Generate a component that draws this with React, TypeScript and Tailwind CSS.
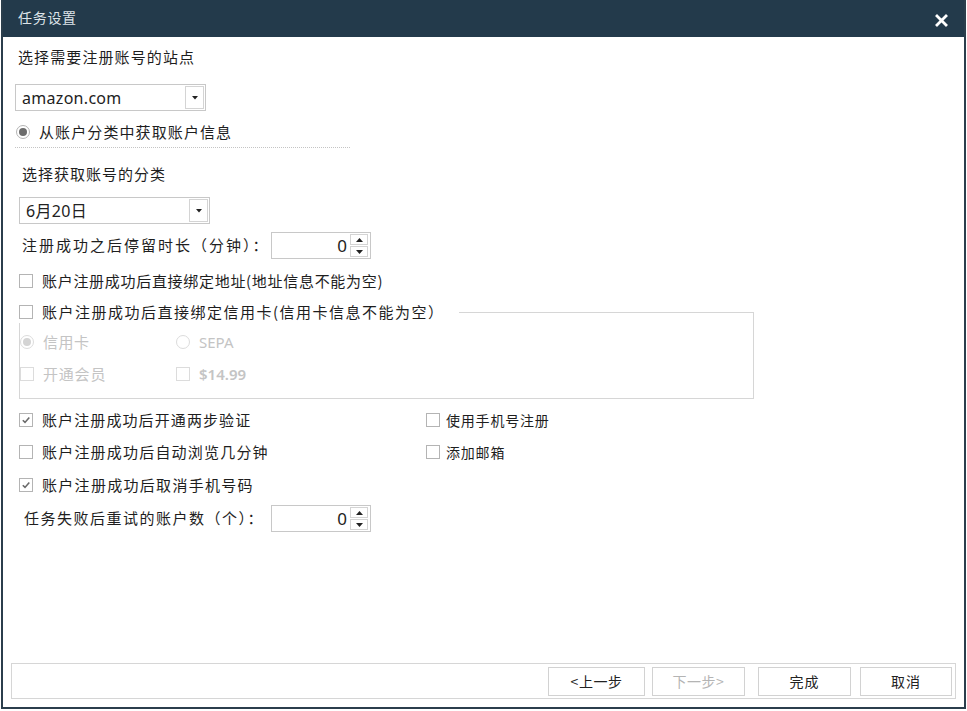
import React from "react";

function Check({ checked = false, disabled = false }: { checked?: boolean; disabled?: boolean }) {
  return (
    <span
      className={
        disabled
          ? "w-[14px] h-[14px] border border-[#dcdcdc] bg-white flex items-center justify-center shrink-0"
          : "w-[14px] h-[14px] border border-[#b4b4b4] bg-white flex items-center justify-center shrink-0"
      }
    >
      {checked && (
        <svg width="10" height="10" viewBox="0 0 10 10">
          <path d="M1.8 5.2 L4 7.4 L8.3 2.4" fill="none" stroke="#6a6a6a" strokeWidth="1.6" />
        </svg>
      )}
    </span>
  );
}

function Radio({ checked = false, disabled = false }: { checked?: boolean; disabled?: boolean }) {
  return (
    <span
      className={
        disabled
          ? "w-[14px] h-[14px] rounded-full border border-[#dcdcdc] bg-white flex items-center justify-center shrink-0"
          : "w-[14px] h-[14px] rounded-full border border-[#b4b4b4] bg-white flex items-center justify-center shrink-0"
      }
    >
      {checked && (
        <span
          className={
            disabled
              ? "w-[8px] h-[8px] rounded-full bg-[#d4d4d4]"
              : "w-[8px] h-[8px] rounded-full bg-[#6c6c6c]"
          }
        />
      )}
    </span>
  );
}

function Combo({ value }: { value: string }) {
  return (
    <div className="w-[191px] h-[27px] border border-[#c8c8c8] bg-white flex items-stretch">
      <div className="flex-1 flex items-center pl-[6px] text-[16px] tracking-[0.3px] font-['Noto_Sans','Noto_Sans_CJK_SC',sans-serif] text-[#222]">
        {value}
      </div>
      <div className="w-[19px] my-[1px] mr-[1px] border border-[#d4d4d4] flex items-center justify-center">
        <svg width="6" height="4" viewBox="0 0 6 4">
          <path d="M0 0 L6 0 L3 3.5 Z" fill="#222" />
        </svg>
      </div>
    </div>
  );
}

function Spin({ value }: { value: string }) {
  return (
    <div className="w-[100px] h-[27px] border border-[#c8c8c8] bg-white flex items-stretch">
      <div className="flex-1 flex items-center justify-end pr-[3px] text-[17px] font-['Noto_Sans',sans-serif] text-[#222]">
        {value}
      </div>
      <div className="w-[18px] my-[1px] mr-[2px] flex flex-col gap-[1px]">
        <div className="flex-1 border border-[#d4d4d4] flex items-center justify-center">
          <svg width="7" height="4" viewBox="0 0 7 4">
            <path d="M0 4 L7 4 L3.5 0 Z" fill="#222" />
          </svg>
        </div>
        <div className="flex-1 border border-[#d4d4d4] flex items-center justify-center">
          <svg width="7" height="4" viewBox="0 0 7 4">
            <path d="M0 0 L7 0 L3.5 4 Z" fill="#222" />
          </svg>
        </div>
      </div>
    </div>
  );
}

export default function App() {
  return (
    <div className="w-[967px] h-[711px] bg-white overflow-hidden font-['Noto_Sans_CJK_SC','Noto_Sans',sans-serif] text-[#1e1e1e]">
      <div className="ml-[1px] w-[965px] h-[709px] border-x-2 border-b-2 border-[#2b3e4c] bg-white flex flex-col">
        {/* title bar */}
        <div className="h-[37px] shrink-0 bg-[#233a4b] flex justify-between pl-[15px] pr-[16px]">
          <div className="pt-[6px] text-[14px] leading-[22px] tracking-[0.7px] text-[#dde3e8]">任务设置</div>
          <div className="pt-[14px]">
            <svg width="13" height="13" viewBox="0 0 13 13">
              <path d="M2 2 L11 11 M11 2 L2 11" stroke="#ffffff" strokeWidth="2.8" strokeLinecap="square" />
            </svg>
          </div>
        </div>

        {/* body */}
        <div className="flex-1 flex flex-col text-[15px]">
          <div className="mt-[9px] ml-[15px] h-[22px] leading-[22px] tracking-[1.1px]">选择需要注册账号的站点</div>

          <div className="mt-[16px] ml-[12px]">
            <Combo value="amazon.com" />
          </div>

          <div className="mt-[10px] ml-[13px] h-[22px] flex items-center gap-[9px]">
            <Radio checked />
            <span className="tracking-[1.1px]">从账户分类中获取账户信息</span>
          </div>

          <div className="mt-[4px] ml-[12px] w-[335px] border-t border-dotted border-[#c4c4c4]" />

          <div className="mt-[15px] ml-[19px] h-[22px] leading-[22px] tracking-[1px]">选择获取账号的分类</div>

          <div className="mt-[12px] ml-[16px]">
            <Combo value="6月20日" />
          </div>

          <div className="mt-[8px] h-[27px] flex items-center">
            <span className="ml-[19px] w-[249px] tracking-[2px]">注册成功之后停留时长（分钟）：</span>
            <Spin value="0" />
          </div>

          <div className="mt-[11px] ml-[16px] h-[22px] flex items-center gap-[9px]">
            <Check />
            <span className="tracking-[0.7px]">账户注册成功后直接绑定地址(地址信息不能为空)</span>
          </div>

          <fieldset className="mt-[9px] ml-[16px] w-[735px] border border-[#d6d6d6] pb-[13px]">
            <legend className="-ml-[1px] pr-[14px] h-[22px] flex items-center gap-[9px] bg-white">
              <Check />
              <span className="tracking-[1.5px]">账户注册成功后直接绑定信用卡(信用卡信息不能为空）</span>
            </legend>
            <div className="mt-[8px] h-[22px] flex items-center text-[#c4c4c4]">
              <div className="w-[156px] flex items-center gap-[9px]">
                <Radio checked disabled />
                <span className="tracking-[0.5px]">信用卡</span>
              </div>
              <div className="flex items-center gap-[9px]">
                <Radio disabled />
                <span className="font-['Noto_Sans',sans-serif]">SEPA</span>
              </div>
            </div>
            <div className="mt-[10px] h-[22px] flex items-center text-[#c4c4c4]">
              <div className="w-[156px] flex items-center gap-[9px]">
                <Check disabled />
                <span className="tracking-[0.8px]">开通会员</span>
              </div>
              <div className="flex items-center gap-[9px]">
                <Check disabled />
                <span className="font-['Noto_Sans',sans-serif] font-semibold">$14.99</span>
              </div>
            </div>
          </fieldset>

          <div className="mt-[10px] ml-[16px] h-[22px] flex items-center">
            <div className="w-[407px] flex items-center gap-[9px]">
              <Check checked />
              <span className="tracking-[1.1px]">账户注册成功后开通两步验证</span>
            </div>
            <div className="flex items-center gap-[6px] text-[14px] tracking-[0.8px]">
              <Check />
              <span>使用手机号注册</span>
            </div>
          </div>

          <div className="mt-[10px] ml-[16px] h-[22px] flex items-center">
            <div className="w-[407px] flex items-center gap-[9px]">
              <Check />
              <span className="tracking-[1.2px]">账户注册成功后自动浏览几分钟</span>
            </div>
            <div className="flex items-center gap-[6px] text-[14px] tracking-[0.8px]">
              <Check />
              <span>添加邮箱</span>
            </div>
          </div>

          <div className="mt-[11px] ml-[16px] h-[22px] flex items-center gap-[9px]">
            <Check checked />
            <span className="tracking-[1.3px]">账户注册成功后取消手机号码</span>
          </div>

          <div className="mt-[9px] h-[27px] flex items-center">
            <span className="ml-[21px] w-[247px] tracking-[1.5px]">任务失败后重试的账户数（个）：</span>
            <Spin value="0" />
          </div>

          {/* footer */}
          <div className="mt-auto mx-[8px] mb-[8px] h-[36px] border border-[#d6d6d6] flex items-center justify-end pr-[3px] text-[14px]">
            <button className="w-[97px] h-[29px] border border-[#d2d2d2] bg-white text-[#222] tracking-[0.5px]">&lt;上一步</button>
            <button className="ml-[7px] w-[93px] h-[29px] border border-[#d2d2d2] bg-white text-[#b4b4b4] tracking-[0.5px]">下一步&gt;</button>
            <button className="ml-[13px] w-[93px] h-[29px] border border-[#d2d2d2] bg-white text-[#222] tracking-[1px]">完成</button>
            <button className="ml-[9px] w-[92px] h-[29px] border border-[#d2d2d2] bg-white text-[#222] tracking-[1px]">取消</button>
          </div>
        </div>
      </div>
    </div>
  );
}
